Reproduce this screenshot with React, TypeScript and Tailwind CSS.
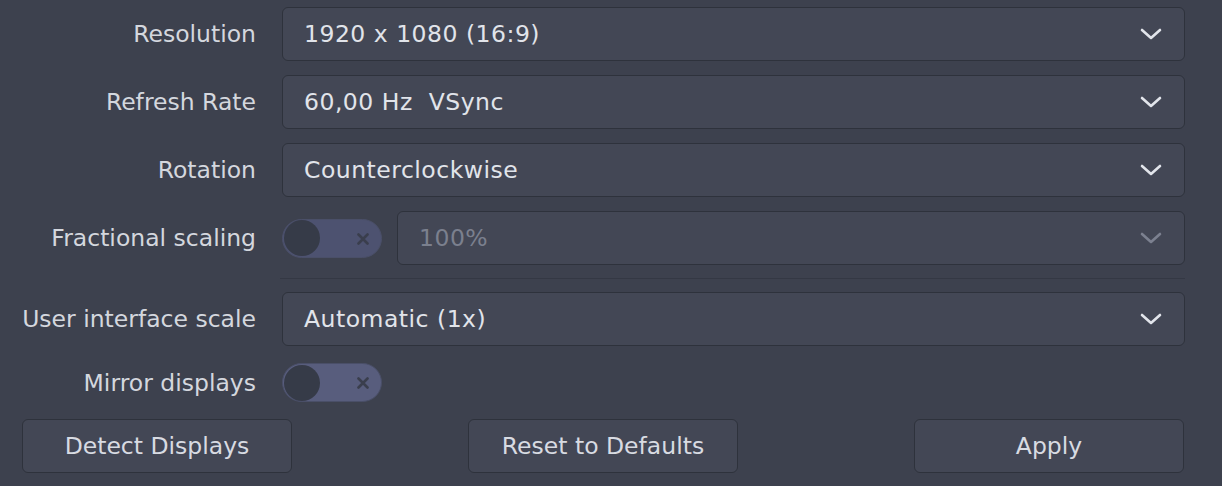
import React from 'react';

function Chevron({ dim }: { dim?: boolean }) {
  return (
    <svg width="22" height="12" viewBox="0 0 22 12" className="shrink-0">
      <path
        d="M2 2 L11 10 L20 2"
        fill="none"
        stroke={dim ? '#7c8190' : '#e2e5eb'}
        strokeWidth="2.6"
        strokeLinecap="round"
        strokeLinejoin="round"
      />
    </svg>
  );
}

function Combo({ value, disabled }: { value: string; disabled?: boolean }) {
  return (
    <div className="flex h-[54px] flex-1 items-center justify-between rounded-[6px] border border-[#2e323c] bg-[#434755] pl-[21px] pr-[22px]">
      <span className={`whitespace-pre pt-[2px] tracking-[0.5px] ${disabled ? 'text-[#7b808e]' : 'text-[#e1e4ea]'}`}>{value}</span>
      <Chevron dim={disabled} />
    </div>
  );
}

function Toggle({ disabled }: { disabled?: boolean }) {
  return (
    <div
      className={`relative flex h-[39px] w-[100px] shrink-0 items-center rounded-full border border-[#4a4f68] pl-px ${
        disabled ? 'bg-[#4d5270]' : 'bg-[#585d7d]'
      }`}
    >
      <div className="h-[36px] w-[36px] rounded-full bg-[#363b48]" />
      <svg width="12" height="12" viewBox="0 0 12 12" className="absolute left-[74px] top-[13px]">
        <path d="M1.5 1.5 L10.5 10.5 M10.5 1.5 L1.5 10.5" stroke="#3a3e4d" strokeWidth="2.6" strokeLinecap="round" />
      </svg>
    </div>
  );
}

function Label({ children }: { children: React.ReactNode }) {
  return <div className="w-[234px] shrink-0 whitespace-nowrap pt-[2px] text-right text-[#d4d7de]">{children}</div>;
}

function Button({ children }: { children: React.ReactNode }) {
  return (
    <div className="flex h-[54px] w-[270px] items-center justify-center rounded-[6px] border border-[#2e323c] bg-[#434755] pt-[2px] text-[#d8dbe2]">
      {children}
    </div>
  );
}

export default function App() {
  return (
    <div
      className="h-[486px] w-[1222px] overflow-hidden bg-[#3d414e] pl-[22px] pr-[37px] pt-[7px] text-[23.5px] leading-none"
      style={{ fontFamily: '"DejaVu Sans", Verdana, sans-serif' }}
    >
      <div className="flex flex-col gap-[14px]">
        <div className="flex items-center gap-[26px]">
          <Label>Resolution</Label>
          <Combo value="1920 x 1080 (16:9)" />
        </div>
        <div className="flex items-center gap-[26px]">
          <Label>Refresh Rate</Label>
          <Combo value="60,00 Hz  VSync" />
        </div>
        <div className="flex items-center gap-[26px]">
          <Label>Rotation</Label>
          <Combo value="Counterclockwise" />
        </div>
        <div className="flex items-center gap-[26px]">
          <Label>Fractional scaling</Label>
          <div className="flex flex-1 items-center gap-[15px]">
            <Toggle disabled />
            <Combo value="100%" disabled />
          </div>
        </div>
      </div>

      <div className="ml-[258px] mt-[13px] h-px bg-[#343844]" />

      <div className="mt-[13px] flex items-center gap-[26px]">
        <Label>User interface scale</Label>
        <Combo value="Automatic (1x)" />
      </div>

      <div className="mt-[17px] flex items-center gap-[26px]">
        <Label>Mirror displays</Label>
        <Toggle />
      </div>

      <div className="mt-[17px] flex items-center justify-between pr-px">
        <Button>Detect Displays</Button>
        <Button>Reset to Defaults</Button>
        <Button>Apply</Button>
      </div>
    </div>
  );
}
